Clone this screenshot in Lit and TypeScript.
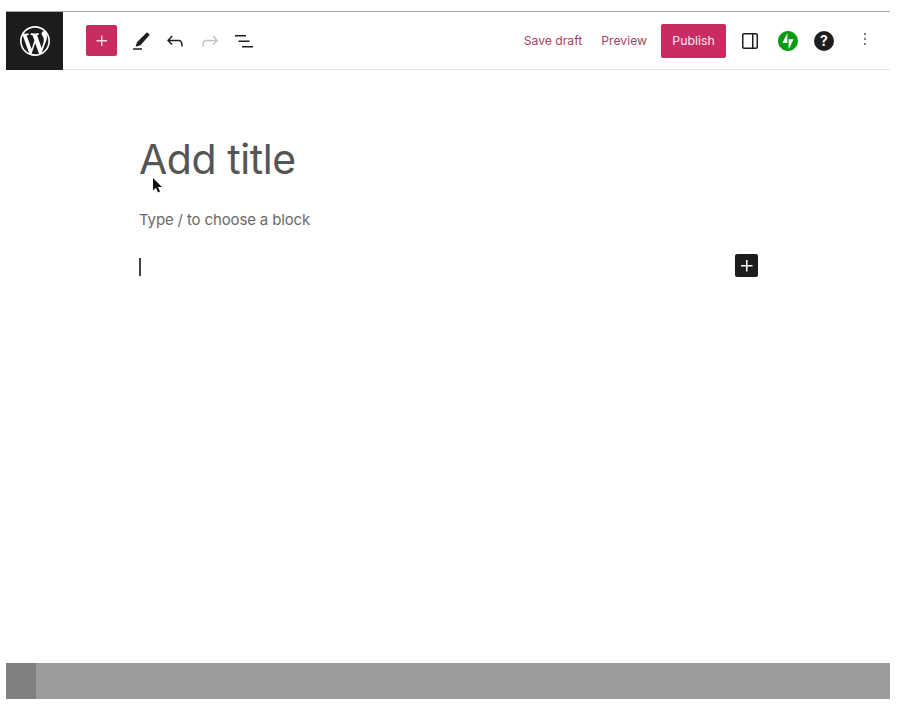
import { LitElement, html, css, svg } from "lit";
import { customElement } from "lit/decorators.js";

const icon = (d: string, cls = "") => html`<svg class="icon ${cls}" viewBox="0 0 24 24" aria-hidden="true">${svg`<path d=${d}></path>`}</svg>`;

const WP = "M20 10c0-5.51-4.49-10-10-10C4.48 0 0 4.49 0 10c0 5.52 4.48 10 10 10 5.51 0 10-4.48 10-10zM7.78 15.37L4.37 6.22c.55-.02 1.17-.08 1.17-.08.5-.06.44-1.13-.06-1.11 0 0-1.45.11-2.37.11-.18 0-.37 0-.58-.01C4.12 2.69 6.87 1.11 10 1.11c2.33 0 4.45.87 6.05 2.34-.68-.11-1.65.39-1.65 1.58 0 .74.45 1.36.9 2.1.35.61.55 1.36.55 2.46 0 1.49-1.4 5-1.4 5l-3.03-8.37c.54-.02.82-.17.82-.17.5-.05.44-1.25-.06-1.22 0 0-1.44.12-2.38.12-.87 0-2.33-.12-2.33-.12-.5-.03-.56 1.2-.06 1.22l.92.08 1.26 3.41zM17.41 10c.24-.64.74-1.87.43-4.25.7 1.29 1.05 2.71 1.05 4.25 0 3.29-1.73 6.24-4.4 7.78.97-2.59 1.94-5.2 2.92-7.78zM6.1 18.09C3.12 16.65 1.11 13.53 1.11 10c0-1.3.23-2.48.72-3.59C3.25 10.3 4.67 14.2 6.1 18.09zm4.03-6.63l2.58 6.98c-.86.29-1.76.45-2.71.45-.79 0-1.57-.11-2.29-.33.81-2.38 1.62-4.74 2.42-7.1z";
const PLUS = "M11 12.5V17.5H12.5V12.5H17.5V11H12.5V6H11V11H6V12.5H11Z";
const EDIT = "M18 3.2l2.8 2.6-9.3 10.4-5 1.6 1.6-4.9ZM4 19.3h9v1.5H4Z";
const UNDO = "M18.3 11.7c-.6-.6-1.4-.9-2.3-.9H6.7l2.9-3.3-1.1-1-4.5 5L8.5 16l1-1-2.7-2.7H16c.5 0 .9.2 1.3.5 1 1 1 3.4 1 4.5v.3h1.5v-.2c0-1.5 0-4.3-1.5-5.7z";
const REDO = "M15.6 6.5l-1.1 1 2.9 3.3H8c-.9 0-1.7.3-2.3.9-1.4 1.5-1.4 4.2-1.4 5.6v.2h1.5v-.3c0-1.1 0-3.5 1-4.5.3-.3.7-.5 1.3-.5h9.2L14.5 15l1.1 1.1 4.6-4.6-4.6-5z";
const LIST = "M3 6h11v1.5H3V6Zm3.5 5.5h11V13h-11v-1.5ZM21 17H10v1.5h11V17Z";
const SIDEBAR = "M18 4H6c-1.1 0-2 .9-2 2v12c0 1.1.9 2 2 2h12c1.1 0 2-.9 2-2V6c0-1.1-.9-2-2-2zM6 18.5c-.3 0-.5-.2-.5-.5V6c0-.3.2-.5.5-.5h8v13H6zm12.5-.5c0 .3-.2.5-.5.5h-2.5v-13H18c.3 0 .5.2.5.5v12z";
const MORE = "M13 19h-2v-2h2v2zm0-6h-2v-2h2v2zm0-6h-2V5h2v2z";
const JETPACK = "M16 0C7.2 0 0 7.2 0 16s7.2 16 16 16 16-7.2 16-16S24.8 0 16 0zM15 19H7l8-16v16zm2 10V13h8l-8 16z";

@customElement("app-root")
export class AppRoot extends LitElement {
  static styles = css`
    :host {
      display: block;
      width: 918px;
      height: 705px;
      box-sizing: border-box;
      padding: 11px 28px 6px 6px;
      background: #fff;
      font-family: Inter, "Liberation Sans", sans-serif;
      overflow: hidden;
      position: relative;
    }
    .frame {
      height: 100%;
      box-sizing: border-box;
      display: flex;
      flex-direction: column;
      border-top: 1px solid #a9a9b0;
    }
    .header {
      height: 58px;
      box-sizing: border-box;
      flex: none;
      display: flex;
      align-items: center;
      border-bottom: 1px solid #e4e4e4;
    }
    .logo {
      width: 57px;
      height: 58px;
      flex: none;
      align-self: flex-start;
      background: #1c1c1c;
      display: flex;
      align-items: center;
      justify-content: center;
    }
    .logo svg { width: 30px; height: 30px; fill: #fff; display: block; }
    .left { display: flex; align-items: center; margin-left: 23px; }
    .add {
      width: 31px;
      height: 31px;
      border-radius: 2px;
      background: #c92c63;
      display: flex;
      align-items: center;
      justify-content: center;
      margin-right: 7px;
    }
    .add .icon { fill: #f7dbe5; width: 22px; height: 22px; }
    .tool { width: 34.3px; display: flex; justify-content: center; }
    .icon { width: 24px; height: 24px; fill: #1e1e1e; display: block; }
    .icon.off { fill: #c4c4c4; }
    .right { margin-left: auto; display: flex; align-items: center; padding-right: 15px; }
    .link { font-size: 12.2px; color: #a63f63; white-space: nowrap; }
    .save { margin-right: 19px; }
    .preview { margin-right: 14px; }
    .publish {
      width: 65px;
      height: 34px;
      border-radius: 2px;
      background: #c92c63;
      color: #fbe9ef;
      font-size: 12.3px;
      display: flex;
      align-items: center;
      justify-content: center;
      margin-right: 12px;
    }
    .jet { width: 20px; height: 20px; fill: #0a9b14; display: block; margin-left: 16px; }
    .help {
      width: 20px;
      height: 20px;
      border-radius: 50%;
      background: #1e1e1e;
      color: #fff;
      font-size: 14px;
      font-weight: 700;
      line-height: 20px;
      text-align: center;
      margin-left: 16px;
      margin-right: 21px;
    }
    .more { width: 20px; height: 20px; margin-top: -3px; fill: #333; }
    .main {
      flex: 1;
      padding: 64px 132px 0 133px;
      min-height: 0;
    }
    .title {
      font-size: 41px;
      line-height: 50px;
      color: #555;
      letter-spacing: -0.43px;
    }
    .hint {
      margin-top: 26px;
      font-size: 15px;
      line-height: 20px;
      letter-spacing: -0.14px;
      color: #6a6a6a;
    }
    .row {
      margin-top: 24px;
      height: 23px;
      display: flex;
      align-items: center;
      justify-content: space-between;
    }
    .caret { width: 1.5px; height: 18px; margin-top: 2px; background: #444; }
    .inserter {
      width: 23px;
      height: 23px;
      border-radius: 2px;
      background: #1c1c1c;
      display: flex;
      align-items: center;
      justify-content: center;
    }
    .inserter .icon { fill: #fff; width: 24px; height: 24px; flex: none; }
    .bar { height: 36px; flex: none; background: #9c9c9c; }
    .thumb { width: 30px; height: 100%; background: #808080; }
    .pointer { position: absolute; left: 152px; top: 178px; width: 11px; height: 16px; }
  `;

  render() {
    return html`
      <div class="frame">
        <header class="header">
          <div class="logo"><svg viewBox="0 0 20 20">${svg`<path d=${WP}></path>`}</svg></div>
          <div class="left">
            <div class="add">${icon(PLUS)}</div>
            <div class="tool">${icon(EDIT)}</div>
            <div class="tool">${icon(UNDO)}</div>
            <div class="tool">${icon(REDO, "off")}</div>
            <div class="tool">${icon(LIST)}</div>
          </div>
          <div class="right">
            <span class="link save">Save draft</span>
            <span class="link preview">Preview</span>
            <div class="publish">Publish</div>
            ${icon(SIDEBAR)}
            <svg class="jet" viewBox="0 0 32 32">${svg`<circle cx="16" cy="16" r="15" fill="#fff"></circle><path d=${JETPACK}></path>`}</svg>
            <div class="help">?</div>
            ${icon(MORE, "more")}
          </div>
        </header>
        <main class="main">
          <div class="title">Add title</div>
          <div class="hint">Type / to choose a block</div>
          <div class="row">
            <div class="caret"></div>
            <div class="inserter">${icon(PLUS)}</div>
          </div>
        </main>
        <div class="bar"><div class="thumb"></div></div>
      </div>
      <svg class="pointer" viewBox="0 0 11 16">${svg`<path d="M1 0v12.5l3-2.7 2 4.7 2-.9-2-4.5h4z" fill="#111"></path>`}</svg>
    `;
  }
}
